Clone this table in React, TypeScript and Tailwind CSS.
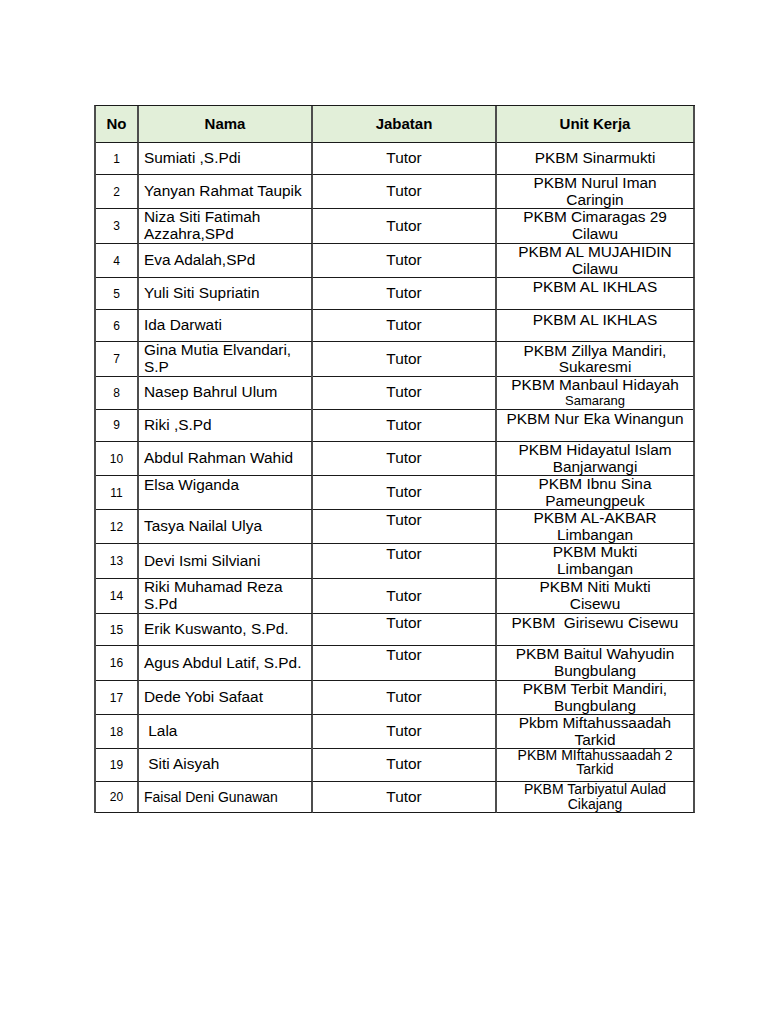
import React from "react";

type Line = { t: string; cls?: string };

interface Row {
  no: string;
  h: string;
  name: Line[];
  nameCls?: string;
  jobCls?: string;
  unit: Line[];
  unitCls?: string;
}

const L = (t: string, cls?: string): Line => ({ t, cls });

const mid = "justify-center";
const top = "justify-start pt-[1px]";

const rows: Row[] = [
  { no: "1", h: "h-[32px]", name: [L("Sumiati ,S.Pdi")], unit: [L("PKBM Sinarmukti")] },
  { no: "2", h: "h-[34px]", name: [L("Yanyan Rahmat Taupik")], unit: [L("PKBM Nurul Iman"), L("Caringin")] },
  { no: "3", h: "h-[35px]", name: [L("Niza Siti Fatimah"), L("Azzahra,SPd")], unit: [L("PKBM Cimaragas 29"), L("Cilawu")] },
  { no: "4", h: "h-[34px]", name: [L("Eva Adalah,SPd")], unit: [L("PKBM AL MUJAHIDIN"), L("Cilawu")] },
  { no: "5", h: "h-[32px]", name: [L("Yuli Siti Supriatin")], unit: [L("PKBM AL IKHLAS")], unitCls: top },
  { no: "6", h: "h-[32px]", name: [L("Ida Darwati")], unit: [L("PKBM AL IKHLAS")], unitCls: "justify-start pt-[1.5px]" },
  { no: "7", h: "h-[34px]", name: [L("Gina Mutia Elvandari,"), L("S.P")], unit: [L("PKBM Zillya Mandiri,"), L("Sukaresmi")], unitCls: "justify-start pt-[0.5px]" },
  {
    no: "8",
    h: "h-[33px]",
    name: [L("Nasep Bahrul Ulum")],
    unit: [L("PKBM Manbaul Hidayah"), L("Samarang", "text-[13px] leading-[16px]")],
    unitCls: "justify-start pt-[0.5px]",
  },
  { no: "9", h: "h-[33px]", name: [L("Riki ,S.Pd")], unit: [L("PKBM Nur Eka Winangun")], unitCls: "justify-start pt-[2px]" },
  { no: "10", h: "h-[34px]", name: [L("Abdul Rahman Wahid")], unit: [L("PKBM Hidayatul Islam"), L("Banjarwangi")] },
  { no: "11", h: "h-[34px]", name: [L("Elsa Wiganda")], nameCls: top, unit: [L("PKBM Ibnu Sina"), L("Pameungpeuk")] },
  { no: "12", h: "h-[34px]", name: [L("Tasya Nailal Ulya")], jobCls: "justify-start pt-[1.5px]", unit: [L("PKBM AL-AKBAR"), L("Limbangan")] },
  { no: "13", h: "h-[35px]", name: [L("Devi Ismi Silviani")], jobCls: "justify-start pt-[1.5px]", unit: [L("PKBM Mukti"), L("Limbangan")] },
  { no: "14", h: "h-[35px]", name: [L("Riki Muhamad Reza"), L("S.Pd")], unit: [L("PKBM Niti Mukti"), L("Cisewu")] },
  { no: "15", h: "h-[32px]", name: [L("Erik Kuswanto, S.Pd.")], jobCls: top, unit: [L("PKBM  Girisewu Cisewu")], unitCls: top },
  { no: "16", h: "h-[35px]", name: [L("Agus Abdul Latif, S.Pd.")], jobCls: top, unit: [L("PKBM Baitul Wahyudin"), L("Bungbulang")] },
  { no: "17", h: "h-[34px]", name: [L("Dede Yobi Safaat")], unit: [L("PKBM Terbit Mandiri,"), L("Bungbulang")] },
  { no: "18", h: "h-[33px]", name: [L(" Lala")], unit: [L("Pkbm Miftahussaadah"), L("Tarkid")] },
  {
    no: "19",
    h: "h-[34px]",
    name: [L(" Siti Aisyah")],
    unit: [L("PKBM MIftahussaadah 2", "text-[14px] leading-[14px]"), L("Tarkid", "text-[14px] leading-[14px]")],
    unitCls: "justify-start pt-0",
  },
  {
    no: "20",
    h: "h-[31px]",
    name: [L("Faisal Deni Gunawan", "text-[14px]")],
    unit: [L("PKBM Tarbiyatul Aulad", "text-[14px] leading-[15px]"), L("Cikajang", "text-[14px] leading-[15px]")],
  },
];

const cell =
  "flex flex-col whitespace-pre border-r-2 border-r-[#4d4d4d] border-b border-b-[#1a1a1a]";

const Lines: React.FC<{ lines: Line[] }> = ({ lines }) => (
  <>
    {lines.map((l, i) => (
      <span key={i} className={l.cls ? `block ${l.cls}` : "block"}>
        {l.t}
      </span>
    ))}
  </>
);

export default function App() {
  return (
    <div className="min-h-screen bg-white pt-[105px] pl-[94px] text-black font-['Liberation_Sans',Arial,sans-serif]">
      <div className="w-[601px] border-t border-t-[#1a1a1a] border-l-2 border-l-[#4d4d4d]">
        {/* header */}
        <div className="grid grid-cols-[43px_174px_184px_198px] h-[37px] bg-[#e2efd9] text-[15px] font-bold">
          <div className={`${cell} items-center justify-center`}>No</div>
          <div className={`${cell} items-center justify-center`}>Nama</div>
          <div className={`${cell} items-center justify-center`}>Jabatan</div>
          <div className={`${cell} items-center justify-center`}>Unit Kerja</div>
        </div>

        {rows.map((r) => (
          <div key={r.no} className={`grid grid-cols-[43px_174px_184px_198px] ${r.h} text-[15.4px] leading-[16.7px]`}>
            <div className={`${cell} items-center justify-center text-[12px] leading-[14px]`}>{r.no}</div>
            <div className={`${cell} pl-[5px] ${r.nameCls ?? mid}`}>
              <Lines lines={r.name} />
            </div>
            <div className={`${cell} items-center ${r.jobCls ?? mid}`}>Tutor</div>
            <div className={`${cell} items-center text-center ${r.unitCls ?? mid}`}>
              <Lines lines={r.unit} />
            </div>
          </div>
        ))}
      </div>
    </div>
  );
}
